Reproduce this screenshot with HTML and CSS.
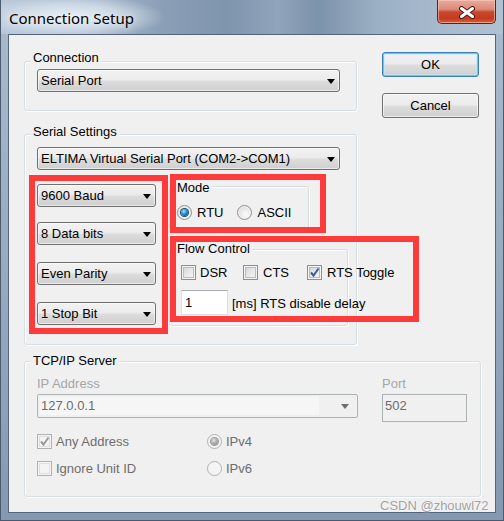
FILE: index.html
```html
<!DOCTYPE html>
<html>
<head>
<meta charset="utf-8">
<link rel="stylesheet" href="styles.css">
</head>
<body>
<div class="window">
  <div class="titlebar">
    <span class="title">Connection Setup</span>
    <div class="close">
      <svg width="18" height="13" viewBox="0 0 18 13">
        <path d="M3.5 2.5 L14.5 10.5 M14.5 2.5 L3.5 10.5" stroke="#4a1a12" stroke-width="5" stroke-linecap="round" fill="none"/>
        <path d="M3.5 2.5 L14.5 10.5 M14.5 2.5 L3.5 10.5" stroke="#ffffff" stroke-width="3" stroke-linecap="round" fill="none"/>
      </svg>
    </div>
  </div>
  <div class="client">
    <div class="top-row">
      <div class="left-col">
        <div class="group g-conn">
          <div class="glabel">Connection</div>
          <div class="combo c-wide mt4"><span>Serial Port</span><i class="arrow"></i></div>
        </div>
        <div class="group g-serial">
          <div class="glabel">Serial Settings</div>
          <div class="combo c-wide mt8"><span>ELTIMA Virtual Serial Port (COM2-&gt;COM1)</span><i class="arrow"></i></div>
          <div class="serial-body">
            <div class="combo-col">
              <div class="combo c-small"><span>9600 Baud</span><i class="arrow"></i></div>
              <div class="combo c-small mt15"><span>8 Data bits</span><i class="arrow"></i></div>
              <div class="combo c-small mt17"><span>Even Parity</span><i class="arrow"></i></div>
              <div class="combo c-small mt17"><span>1 Stop Bit</span><i class="arrow"></i></div>
            </div>
            <div class="right-col">
              <div class="group g-mode">
                <div class="glabel">Mode</div>
                <div class="radio-row">
                  <label class="opt"><span class="radio on"></span><span>RTU</span></label>
                  <label class="opt"><span class="radio"></span><span>ASCII</span></label>
                </div>
              </div>
              <div class="group g-flow">
                <div class="glabel">Flow Control</div>
                <div class="check-row">
                  <label class="opt o-dsr"><span class="cb"></span><span>DSR</span></label>
                  <label class="opt o-cts"><span class="cb"></span><span>CTS</span></label>
                  <label class="opt"><span class="cb"><svg width="13" height="13" viewBox="0 0 13 13"><path d="M3 6.5 L5.5 9.5 L10.5 2.5" stroke="#3d5a9c" stroke-width="2" fill="none"/></svg></span><span>RTS Toggle</span></label>
                </div>
                <div class="edit-row">
                  <div class="edit">1</div>
                  <span class="edit-note">[ms] RTS disable delay</span>
                </div>
              </div>
            </div>
          </div>
        </div>
      </div>
      <div class="btn-col">
        <div class="btn default">OK</div>
        <div class="btn">Cancel</div>
      </div>
    </div>
    <div class="group g-tcp">
      <div class="glabel">TCP/IP Server</div>
      <div class="tcp-grid">
        <div class="dis-label">IP Address</div>
        <div class="dis-label">Port</div>
        <div class="combo-dis"><span class="field">127.0.0.1</span><i class="arrow gray"></i></div>
        <div class="edit-dis">502</div>
      </div>
      <div class="opt-grid">
        <label class="opt dis"><span class="cb dis"><svg width="13" height="13" viewBox="0 0 13 13"><path d="M3 6.5 L5.5 9.5 L10.5 2.5" stroke="#9a9a9a" stroke-width="2" fill="none"/></svg></span><span>Any Address</span></label>
        <label class="opt dis"><span class="radio dis on"></span><span>IPv4</span></label>
        <label class="opt dis"><span class="cb dis"></span><span>Ignore Unit ID</span></label>
        <label class="opt dis"><span class="radio dis"></span><span>IPv6</span></label>
      </div>
    </div>
  </div>
  <div class="mark">CSDN @zhouwl72</div>
  <div class="annot a1"></div>
  <div class="annot a2"></div>
  <div class="annot a3"></div>
</div>
</body>
</html>
```

FILE: styles.css
```css
* { box-sizing: border-box; }
html, body { margin: 0; padding: 0; }
body {
  width: 504px;
  height: 521px;
  overflow: hidden;
  font-family: "Liberation Sans", Arial, sans-serif;
  font-size: 13px;
  line-height: 15px;
  color: #000;
  background: #fff;
}
.window {
  position: relative;
  width: 504px;
  height: 521px;
  padding: 0 8px 8px 8px;
  background: linear-gradient(180deg, #a9bbce 0%, #97abc1 50%, #8499b1 100%);
  box-shadow: inset 1px 0 #4b5a6c, inset -1px 0 #4b5a6c, inset 0 -1px #4b5a6c;
}
.titlebar {
  height: 34px;
  margin: 0 -8px;
  padding: 0 8px 0 9px;
  display: flex;
  justify-content: space-between;
  align-items: flex-start;
  background:
    radial-gradient(ellipse 95px 22px at 70px 17px, rgba(235,242,248,0.95) 0%, rgba(220,230,240,0.7) 55%, rgba(200,215,230,0) 100%),
    linear-gradient(90deg, #b7c7d8 0%, #a4b6c9 20%, #8b9fb7 32%, #7f94ad 45%, #90a4bb 55%, #7d92ab 63%, #9cb0c5 75%, #a8bacd 88%, #b0c1d3 100%);
  box-shadow: inset 1px 0 #4b5a6c, inset -1px 0 #4b5a6c;
}
.title {
  font-family: "Noto Sans", "Open Sans", sans-serif;
  font-size: 15px;
  line-height: 20px;
  padding-top: 8px;
  color: #000;
  text-shadow: 0 0 6px rgba(255,255,255,0.9);
}
.close {
  width: 59px;
  height: 24px;
  display: flex;
  justify-content: center;
  align-items: center;
  padding-top: 1px;
  border: 1px solid #5b2218;
  border-top: none;
  border-radius: 0 0 5px 5px;
  background: linear-gradient(180deg, #e9ab9d 0%, #dc8b79 40%, #c8492f 52%, #c53a20 80%, #d4613f 100%);
  box-shadow: inset 0 0 0 1px rgba(255,210,195,0.55);
}
.client {
  height: 479px;
  border: 1px solid #52657b;
  background: #f0f0f0;
}
.top-row { display: flex; }
.left-col { margin-left: 15px; width: 333px; flex: none; }
.btn-col {
  margin-left: 25px;
  margin-top: 17px;
  display: flex;
  flex-direction: column;
  gap: 16px;
}
.btn {
  width: 97px;
  height: 25px;
  display: flex;
  align-items: center;
  justify-content: center;
  border: 1px solid #707070;
  border-radius: 3px;
  background: linear-gradient(180deg, #f2f2f2 0%, #ebebeb 48%, #dddddd 52%, #cfcfcf 100%);
  box-shadow: inset 0 0 0 1px rgba(255,255,255,0.6);
}
.btn.default {
  border-color: #3c7fb1;
  box-shadow: inset 0 0 0 1px #4fd1f9, inset 0 0 0 2px rgba(190,235,252,0.6);
}
.group {
  border: 1px solid #d5dfe5;
  border-radius: 3px;
  box-shadow: inset 1px 1px 0 #ffffff, 1px 1px 0 #ffffff;
}
.glabel {
  display: table;
  background: #f0f0f0;
  padding: 0 2px;
  line-height: 15px;
  white-space: nowrap;
}
.g-conn { margin-top: 26px; height: 50px; padding-left: 12px; }
.g-conn .glabel { margin: -12px 0 0 -6px; }
.g-serial { margin-top: 23px; height: 211px; padding-left: 12px; }
.g-serial > .glabel { margin: -11px 0 0 -6px; }
.mt4 { margin-top: 4px; }
.mt8 { margin-top: 8px; }
.mt15 { margin-top: 15px; }
.mt17 { margin-top: 17px; }
.combo {
  position: relative;
  height: 23px;
  display: flex;
  align-items: center;
  padding: 0 3px;
  border: 1px solid #707070;
  border-radius: 3px;
  background: linear-gradient(180deg, #f2f2f2 0%, #ebebeb 48%, #dddddd 52%, #cfcfcf 100%);
  box-shadow: inset 0 0 0 1px rgba(255,255,255,0.55);
  white-space: nowrap;
  line-height: 21px;
}
.c-wide { width: 303px; }
.c-small { width: 119px; }
.combo span { flex: 1; }
.arrow {
  flex: none;
  width: 0;
  height: 0;
  border-left: 4px solid transparent;
  border-right: 4px solid transparent;
  border-top: 5px solid #000;
  margin-right: 1px;
  margin-top: 1px;
}
.arrow.gray { border-top-color: #6d6d6d; }
.serial-body { display: flex; margin-top: 14px; }
.combo-col { width: 119px; flex: none; }
.right-col { margin-left: 13px; margin-top: 2px; flex: none; }
.g-mode { width: 140px; height: 46px; }
.g-mode .glabel { margin: -7px 0 0 5px; }
.radio-row { display: flex; gap: 14px; margin: 10px 0 0 7px; }
.opt { display: flex; flex: none; align-items: center; gap: 5px; white-space: nowrap; line-height: 15px; }
.radio {
  flex: none;
  width: 15px;
  height: 15px;
  border-radius: 50%;
  border: 1px solid #8e8f8f;
  background: radial-gradient(circle at 60% 65%, #fbfbfb 0%, #e6e6e6 55%, #cfcfcf 100%);
  box-shadow: inset 0 0 0 1px #f4f4f4;
  display: flex;
  align-items: center;
  justify-content: center;
}
.radio.on::after {
  content: "";
  width: 7px;
  height: 7px;
  border-radius: 50%;
  background: radial-gradient(circle at 40% 35%, #b8ecff 0%, #3aa0e0 35%, #0d5a9e 75%, #083f72 100%);
  box-shadow: 0 0 0 1px #1c4a74;
}
.radio.dis { border-color: #b1b1b1; background: #f4f4f4; }
.radio.dis.on::after {
  background: radial-gradient(circle at 40% 35%, #e8e8e8 0%, #a8a8a8 50%, #8a8a8a 100%);
  box-shadow: 0 0 0 1px #9a9a9a;
}
.g-flow { margin-top: 17px; width: 179px; height: 77px; }
.g-flow .glabel { margin: -9px 0 0 5px; }
.check-row { display: flex; margin: 9px 0 0 11px; }
.o-dsr { width: 62px; gap: 4px; }
.o-cts { width: 64px; }
.cb {
  width: 15px;
  height: 15px;
  flex: none;
  border: 1px solid #8e8f8f;
  background: linear-gradient(135deg, #cdd1d6 0%, #e6e8ea 50%, #f8f8f8 100%);
  box-shadow: inset 0 0 0 1px #f4f4f4, inset 0 0 0 2px #b8bcc2;
  display: flex;
  align-items: center;
  justify-content: center;
}
.cb.dis {
  border-color: #b1b1b1;
  background: #f4f4f4;
  box-shadow: inset 0 0 0 1px #f4f4f4, inset 0 0 0 2px #dedede;
}
.edit-row { display: flex; align-items: center; margin: 10px 0 0 11px; white-space: nowrap; }
.edit {
  flex: none;
  width: 47px;
  height: 25px;
  padding: 2px 0 0 3px;
  background: #fff;
  border: 1px solid #dbdfe6;
  border-top-color: #abadb3;
  line-height: 19px;
}
.edit-note { flex: none; margin-left: 4px; padding-top: 2px; }
.g-tcp { margin: 16px 0 0 15px; width: 457px; height: 136px; padding-left: 12px; }
.g-tcp > .glabel { margin: -9px 0 0 -6px; }
.tcp-grid {
  display: grid;
  grid-template-columns: 321px 85px;
  column-gap: 24px;
  margin-top: 8px;
  align-items: start;
}
.dis-label { color: #a6a6a6; margin-bottom: 3px; }
.combo-dis {
  height: 24px;
  display: flex;
  align-items: center;
  padding: 2px 7px 2px 2px;
  border: 1px solid #adb2b5;
  border-radius: 2px;
  background: #f0f0f0;
  color: #6d6d6d;
}
.combo-dis .field {
  flex: 1;
  height: 18px;
  line-height: 18px;
  padding-left: 1px;
  margin-right: 22px;
  background: #f6f6f6;
}
.edit-dis {
  height: 28px;
  padding: 3px 0 0 2px;
  border: 1px solid #adb2b5;
  background: #f0f0f0;
  color: #6d6d6d;
}
.opt-grid {
  display: grid;
  grid-template-columns: 170px auto;
  row-gap: 12px;
  margin-top: 12px;
}
.opt.dis { color: #6d6d6d; gap: 4px; }
.mark {
  position: absolute;
  left: 380px;
  top: 498px;
  color: #a2a2a2;
  text-shadow: 0 0 2px #fff;
}
.annot {
  position: absolute;
  border: 6px solid #fe3b3b;
}
.a1 { left: 29px; top: 175px; width: 139px; height: 159px; }
.a2 { left: 170px; top: 174px; width: 156px; height: 59px; }
.a3 { left: 170px; top: 236px; width: 249px; height: 86px; }
```
